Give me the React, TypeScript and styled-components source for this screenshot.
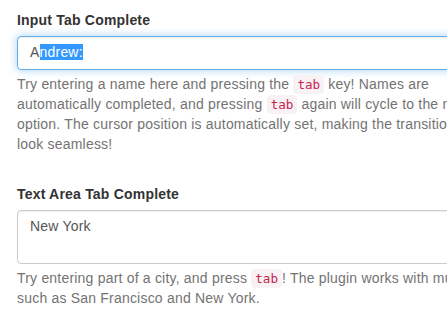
import React from 'react';
import styled, { createGlobalStyle } from 'styled-components';

const GlobalStyle = createGlobalStyle`
  html, body {
    margin: 0;
    padding: 0;
    background: #fff;
    overflow: hidden;
  }
  body {
    font-family: "Liberation Sans", Arial, Helvetica, sans-serif;
    font-size: 14px;
    line-height: 1.42857;
    color: #333;
    letter-spacing: 0.2px;
  }
`;

const Page = styled.div`
  width: 468px;
  padding: 11px 0 0 17px;
`;

const FormGroup = styled.div<{ gap: number }>`
  margin-bottom: ${({ gap }) => gap}px;
`;

const Label = styled.label`
  display: block;
  margin-bottom: 5px;
  font-weight: bold;
  color: #333;
`;

const FakeInput = styled.div`
  box-sizing: border-box;
  height: 34px;
  padding: 6px 12px;
  border: 1px solid #66afe9;
  border-radius: 4px;
  color: #555;
  background: #fff;
  box-shadow: inset 0 1px 1px rgba(0, 0, 0, 0.075), 0 0 8px rgba(102, 175, 233, 0.6);
  white-space: nowrap;
`;

const Selected = styled.span`
  background: #3399ff;
  color: #fff;
`;

const TextArea = styled.textarea`
  display: block;
  box-sizing: border-box;
  width: 100%;
  height: 54px;
  margin: 0;
  padding: 6px 12px;
  border: 1px solid #ccc;
  border-radius: 4px;
  color: #555;
  font: inherit;
  letter-spacing: inherit;
  line-height: 1.42857;
  resize: none;
  box-shadow: inset 0 1px 1px rgba(0, 0, 0, 0.075);
  outline: none;
`;

const Help = styled.p`
  margin: 5px 0 10px;
  color: #737373;
`;

const Code = styled.code`
  padding: 2px 4px;
  font-family: "DejaVu Sans Mono", "Liberation Mono", monospace;
  font-size: 90%;
  letter-spacing: 0;
  color: #c7254e;
  background: #f9f2f4;
  border-radius: 4px;
`;

export default function App() {
  return (
    <>
      <GlobalStyle />
      <Page>
        <FormGroup gap={30}>
          <Label>Input Tab Complete</Label>
          <FakeInput>
            A<Selected>ndrew:</Selected>
          </FakeInput>
          <Help>
            Try entering a name here and pressing the <Code>tab</Code> key! Names are
            automatically completed, and pressing <Code>tab</Code> again will cycle to the next
            option. The cursor position is automatically set, making the transition look seamless!
          </Help>
        </FormGroup>
        <FormGroup gap={15}>
          <Label>Text Area Tab Complete</Label>
          <TextArea defaultValue="New York" />
          <Help>
            Try entering part of a city, and press <Code>tab</Code>! The plugin works with multiple
            such as San Francisco and New York.
          </Help>
        </FormGroup>
      </Page>
    </>
  );
}
